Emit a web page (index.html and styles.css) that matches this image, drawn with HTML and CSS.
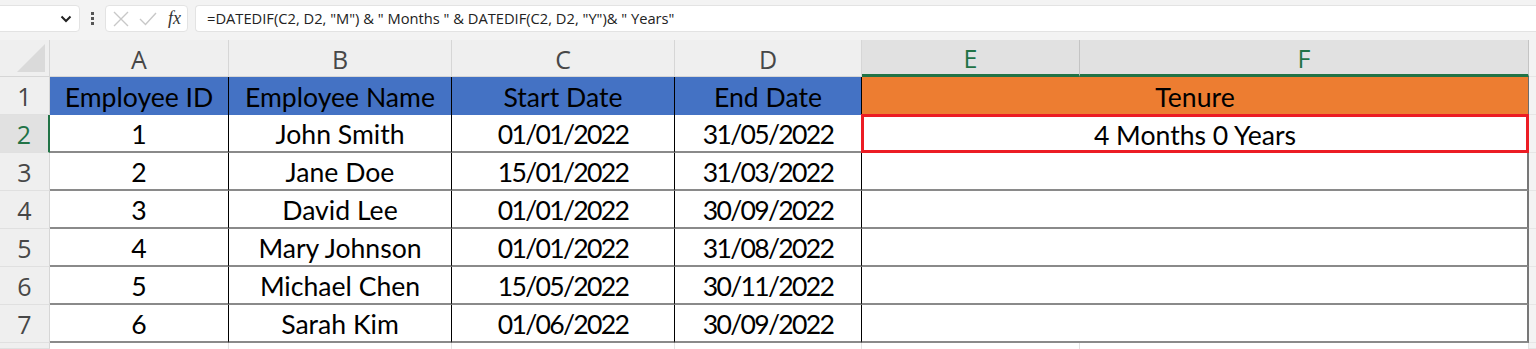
FILE: index.html
```html
<!DOCTYPE html>
<html lang="en">
<head>
    <meta charset="UTF-8">
    <title>Tenure - DATEDIF</title>
    <link rel="stylesheet" href="styles.css">
</head>
<body>
    <!-- Barra de fórmulas -->
    <div class="toolbar">
        <div class="name-box">
            <svg class="chevron" width="12" height="8" viewBox="0 0 12 8"><path d="M1.5 1.5 L6 6 L10.5 1.5" fill="none" stroke="#222" stroke-width="2"/></svg>
        </div>
        <div class="dots"><span></span><span></span><span></span></div>
        <div class="fx-box">
            <svg width="16" height="16" viewBox="0 0 16 16"><path d="M1 1 L15 15 M15 1 L1 15" stroke="#c8c8c8" stroke-width="1.4"/></svg>
            <svg width="18" height="14" viewBox="0 0 18 14"><path d="M1 7 L6.5 12.5 L17 1" fill="none" stroke="#c8c8c8" stroke-width="1.4"/></svg>
            <span class="fx">fx</span>
        </div>
        <div class="formula">=DATEDIF(C2, D2, "M") &amp; " Months " &amp; DATEDIF(C2, D2, "Y")&amp; " Years"</div>
    </div>

    <!-- Hoja -->
    <div class="sheet">
        <div class="corner"><div class="triangle"></div></div>
        <div class="col-head">A</div>
        <div class="col-head">B</div>
        <div class="col-head">C</div>
        <div class="col-head">D</div>
        <div class="col-head active">E</div>
        <div class="col-head active">F</div>
        <div class="outside"></div>

        <div class="row-head">1</div>
        <div class="cell title">Employee ID</div>
        <div class="cell title">Employee Name</div>
        <div class="cell title">Start Date</div>
        <div class="cell title">End Date</div>
        <div class="cell tenure span2">Tenure</div>
        <div class="outside"></div>

        <div class="row-head active">2</div>
        <div class="cell data">1</div>
        <div class="cell data">John Smith</div>
        <div class="cell data date">01/01/2022</div>
        <div class="cell data date">31/05/2022</div>
        <div class="cell result span2">4 Months 0 Years</div>
        <div class="outside"></div>

        <div class="row-head">3</div>
        <div class="cell data">2</div>
        <div class="cell data">Jane Doe</div>
        <div class="cell data date">15/01/2022</div>
        <div class="cell data date">31/03/2022</div>
        <div class="cell empty span2"></div>
        <div class="outside"></div>

        <div class="row-head">4</div>
        <div class="cell data">3</div>
        <div class="cell data">David Lee</div>
        <div class="cell data date">01/01/2022</div>
        <div class="cell data date">30/09/2022</div>
        <div class="cell empty span2"></div>
        <div class="outside"></div>

        <div class="row-head">5</div>
        <div class="cell data">4</div>
        <div class="cell data">Mary Johnson</div>
        <div class="cell data date">01/01/2022</div>
        <div class="cell data date">31/08/2022</div>
        <div class="cell empty span2"></div>
        <div class="outside"></div>

        <div class="row-head">6</div>
        <div class="cell data">5</div>
        <div class="cell data">Michael Chen</div>
        <div class="cell data date">15/05/2022</div>
        <div class="cell data date">30/11/2022</div>
        <div class="cell empty span2"></div>
        <div class="outside"></div>

        <div class="row-head">7</div>
        <div class="cell data">6</div>
        <div class="cell data">Sarah Kim</div>
        <div class="cell data date">01/06/2022</div>
        <div class="cell data date">30/09/2022</div>
        <div class="cell empty span2"></div>
        <div class="outside"></div>

        <div class="row-head"></div>
        <div class="cell blank"></div>
        <div class="cell blank"></div>
        <div class="cell blank"></div>
        <div class="cell blank"></div>
        <div class="cell blank"></div>
        <div class="cell blank"></div>
        <div class="outside"></div>
    </div>
</body>
</html>
```

FILE: styles.css
```css
/* General */
* {
    box-sizing: border-box;
}

body {
    margin: 0;
    width: 1536px;
    height: 349px;
    overflow: hidden;
    background: #f3f3f3;
    font-family: 'Lato', sans-serif;
}

/* Barra de fórmulas */
.toolbar {
    height: 40px;
    display: flex;
    align-items: flex-start;
    padding-top: 5px;
    background: #f3f3f3;
}

.name-box {
    width: 90px;
    height: 27px;
    margin-left: -10px;
    background: #fff;
    border: 1px solid #e3e3e3;
    border-radius: 4px;
    display: flex;
    align-items: center;
    justify-content: flex-end;
    padding-right: 7px;
}

.dots {
    width: 25px;
    height: 27px;
    display: flex;
    flex-direction: column;
    align-items: center;
    justify-content: center;
    gap: 2px;
}

.dots span {
    width: 3px;
    height: 3px;
    background: #555;
}

.fx-box {
    width: 83px;
    height: 27px;
    background: #fff;
    border: 1px solid #e3e3e3;
    border-radius: 4px;
    display: flex;
    align-items: center;
    gap: 10px;
    padding-left: 7px;
}

.fx {
    font-family: 'Liberation Serif', serif;
    font-style: italic;
    font-size: 18px;
    color: #333;
    margin-left: 1px;
}

.formula {
    flex: 1;
    height: 27px;
    margin-left: 7px;
    background: #fff;
    border: 1px solid #e3e3e3;
    border-radius: 4px 0 0 4px;
    border-right: none;
    padding-left: 11px;
    line-height: 25px;
    font-family: 'Open Sans', sans-serif;
    font-size: 14.7px;
    color: #222;
}

/* Hoja */
.sheet {
    display: grid;
    grid-template-columns: 50px 179px 223px 223px 187px 218px 449px 1fr;
    grid-template-rows: 37px repeat(7, 38px) 1fr;
    height: 309px;
}

.corner {
    background: #efefef;
    border-right: 1px solid #d6d6d6;
    border-bottom: 1px solid #d6d6d6;
    position: relative;
}

.triangle {
    position: absolute;
    right: 4px;
    bottom: 4px;
    width: 0;
    height: 0;
    border-left: 28px solid transparent;
    border-bottom: 28px solid #dadada;
}

.col-head {
    background: #efefef;
    border-right: 1px solid #d6d6d6;
    border-bottom: 1px solid #d6d6d6;
    display: flex;
    align-items: center;
    justify-content: center;
    font-family: 'Open Sans', sans-serif;
    font-size: 25px;
    color: #474747;
    padding-top: 2px;
}

.col-head.active {
    background: #e1e1e1;
    color: #217346;
    border-bottom: 3px solid #217346;
    border-right-color: #c4c4c4;
}

.row-head {
    background: #efefef;
    border-right: 1px solid #d6d6d6;
    border-bottom: 1px solid #e0e0e0;
    display: flex;
    align-items: center;
    justify-content: center;
    font-family: 'Open Sans', sans-serif;
    font-size: 25px;
    color: #474747;
}

.row-head.active {
    background: #e1e1e1;
    color: #217346;
    border-right: 2px solid #217346;
}

.outside {
    background: #f3f3f3;
    border-bottom: 1px solid #e6e6e6;
}

.cell {
    display: flex;
    align-items: center;
    justify-content: center;
    font-size: 26.6px;
    color: #000;
    background: #fff;
    padding-top: 2px;
}

.span2 {
    grid-column: span 2;
}

.title {
    background: #4472c4;
    border-right: 1px solid #000;
}

.tenure {
    background: #ed7d31;
    border-right: 1px solid #6c6c6c;
}

.data {
    border-right: 1px solid #000;
    border-bottom: 2px solid #8a8a8a;
}

.date {
    letter-spacing: -1.7px;
}

.empty {
    border-right: 2px solid #777;
    border-bottom: 2px solid #8a8a8a;
}

.result {
    border: 3px solid #ec1c24;
    margin: -1px 0 0 -1px;
}

.blank {
    border-right: 1px solid #e2e2e2;
}
```
